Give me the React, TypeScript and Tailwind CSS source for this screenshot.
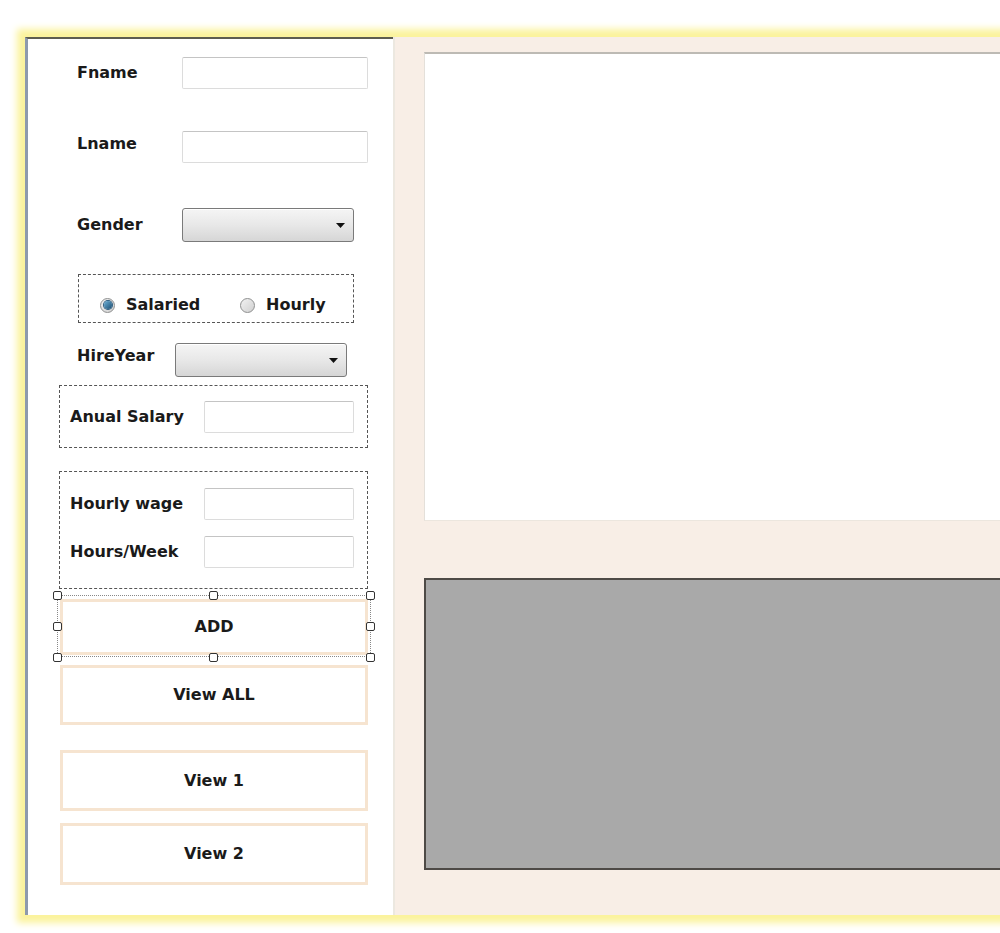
import React from "react";

const font = { fontFamily: '"DejaVu Sans", Verdana, sans-serif' };

function TextBox({ w = "w-[186px]" }: { w?: string }) {
  return (
    <div
      className={`${w} h-[32px] bg-white border border-[#dcdcdc] border-t-[#c4c4c4] rounded-[2px]`}
    />
  );
}

function Select({ w }: { w: string }) {
  return (
    <div
      className={`${w} h-[34px] rounded-[3px] border border-[#7a7a7a] bg-gradient-to-b from-[#f5f5f5] via-[#e8e8e8] to-[#d6d6d6] flex items-center justify-end pr-[8px] shadow-[inset_0_1px_0_#ffffff]`}
    >
      <svg width="9" height="5" viewBox="0 0 9 5">
        <path d="M0 0 L9 0 L4.5 5 Z" fill="#111" />
      </svg>
    </div>
  );
}

function Radio({ checked }: { checked?: boolean }) {
  return (
    <div className="w-[15px] h-[15px] rounded-full border border-[#8e8f8f] bg-gradient-to-br from-[#f2f2f2] to-[#d0d0d0] flex items-center justify-center">
      {checked && (
        <div className="w-[8px] h-[8px] rounded-full bg-gradient-to-br from-[#6fb2d8] to-[#1b4f74] shadow-[0_0_0_1px_#2b5c80]" />
      )}
    </div>
  );
}

function Btn({ label, h }: { label: string; h: string }) {
  return (
    <div
      className={`w-[308px] ${h} border-[3px] border-[#f6e4d0] bg-white flex items-center justify-center text-[16px] font-bold text-[#1a1a1a]`}
    >
      {label}
    </div>
  );
}

function Handle({ cls }: { cls: string }) {
  return (
    <div
      className={`absolute w-[9px] h-[9px] rounded-[2px] border-[1.5px] border-[#333] bg-white ${cls}`}
    />
  );
}

export default function App() {
  return (
    <div
      className="w-[1000px] h-[933px] bg-white overflow-hidden pt-[37px] pl-[25px]"
      style={font}
    >
      <div className="w-[990px] h-[878px] flex shadow-[0_0_7px_8px_#fbf39c]">
        {/* Left panel */}
        <div className="w-[368px] h-full bg-white border-l-[3px] border-l-[#8e9aac] border-t-2 border-t-[#5d5d50] flex flex-col text-[16px] font-bold text-[#1a1a1a]">
          <div className="mt-[18px] ml-[49px] flex items-center">
            <span className="w-[105px]">Fname</span>
            <TextBox />
          </div>
          <div className="mt-[42px] ml-[49px] flex items-center">
            <span className="w-[105px] -mt-[6px]">Lname</span>
            <TextBox />
          </div>
          <div className="mt-[45px] ml-[49px] flex items-center">
            <span className="w-[105px]">Gender</span>
            <Select w="w-[172px]" />
          </div>
          <div className="mt-[32px] ml-[50px] w-[276px] h-[49px] border border-dashed border-[#555] flex items-center pl-[21px] pt-[13px]">
            <div className="w-[140px] flex items-center gap-[11px]">
              <Radio checked />
              <span>Salaried</span>
            </div>
            <div className="flex items-center gap-[11px]">
              <Radio />
              <span>Hourly</span>
            </div>
          </div>
          <div className="mt-[20px] ml-[49px] flex items-center">
            <span className="w-[98px] -mt-[8px]">HireYear</span>
            <Select w="w-[172px]" />
          </div>
          <div className="mt-[8px] ml-[31px] w-[309px] h-[63px] border border-dashed border-[#555] flex items-center pl-[10px]">
            <span className="w-[134px]">Anual Salary</span>
            <TextBox w="w-[150px]" />
          </div>
          <div className="mt-[23px] ml-[31px] w-[309px] h-[118px] border border-dashed border-[#555] flex flex-col gap-[16px] pt-[16px] pl-[10px]">
            <div className="flex items-center">
              <span className="w-[134px]">Hourly wage</span>
              <TextBox w="w-[150px]" />
            </div>
            <div className="flex items-center">
              <span className="w-[134px]">Hours/Week</span>
              <TextBox w="w-[150px]" />
            </div>
          </div>
          <div className="mt-[10px] ml-[32px] relative">
            <div className="absolute -left-[3px] -top-[4px] w-[314px] h-[62px] border border-dotted border-[#888]" />
            <Handle cls="-left-[7px] -top-[8px]" />
            <Handle cls="left-[149px] -top-[8px]" />
            <Handle cls="left-[306px] -top-[8px]" />
            <Handle cls="-left-[7px] top-[23px]" />
            <Handle cls="left-[306px] top-[23px]" />
            <Handle cls="-left-[7px] top-[54px]" />
            <Handle cls="left-[149px] top-[54px]" />
            <Handle cls="left-[306px] top-[54px]" />
            <Btn label="ADD" h="h-[56px]" />
          </div>
          <div className="mt-[10px] ml-[32px]">
            <Btn label="View ALL" h="h-[60px]" />
          </div>
          <div className="mt-[25px] ml-[32px]">
            <Btn label="View 1" h="h-[61px]" />
          </div>
          <div className="mt-[12px] ml-[32px]">
            <Btn label="View 2" h="h-[62px]" />
          </div>
        </div>
        {/* Right panel */}
        <div className="flex-1 h-full bg-[#f8eee6] border-l-2 border-l-[#ece8e0] pl-[29px] pt-[15px] flex flex-col">
          <div className="h-[469px] bg-white border-t-2 border-t-[#bdbab4] border-l border-l-[#e4e0da] border-b border-b-[#ece6de]" />
          <div className="mt-[57px] h-[292px] bg-[#a9a9a9] border-2 border-[#4e4a46]" />
        </div>
      </div>
    </div>
  );
}
